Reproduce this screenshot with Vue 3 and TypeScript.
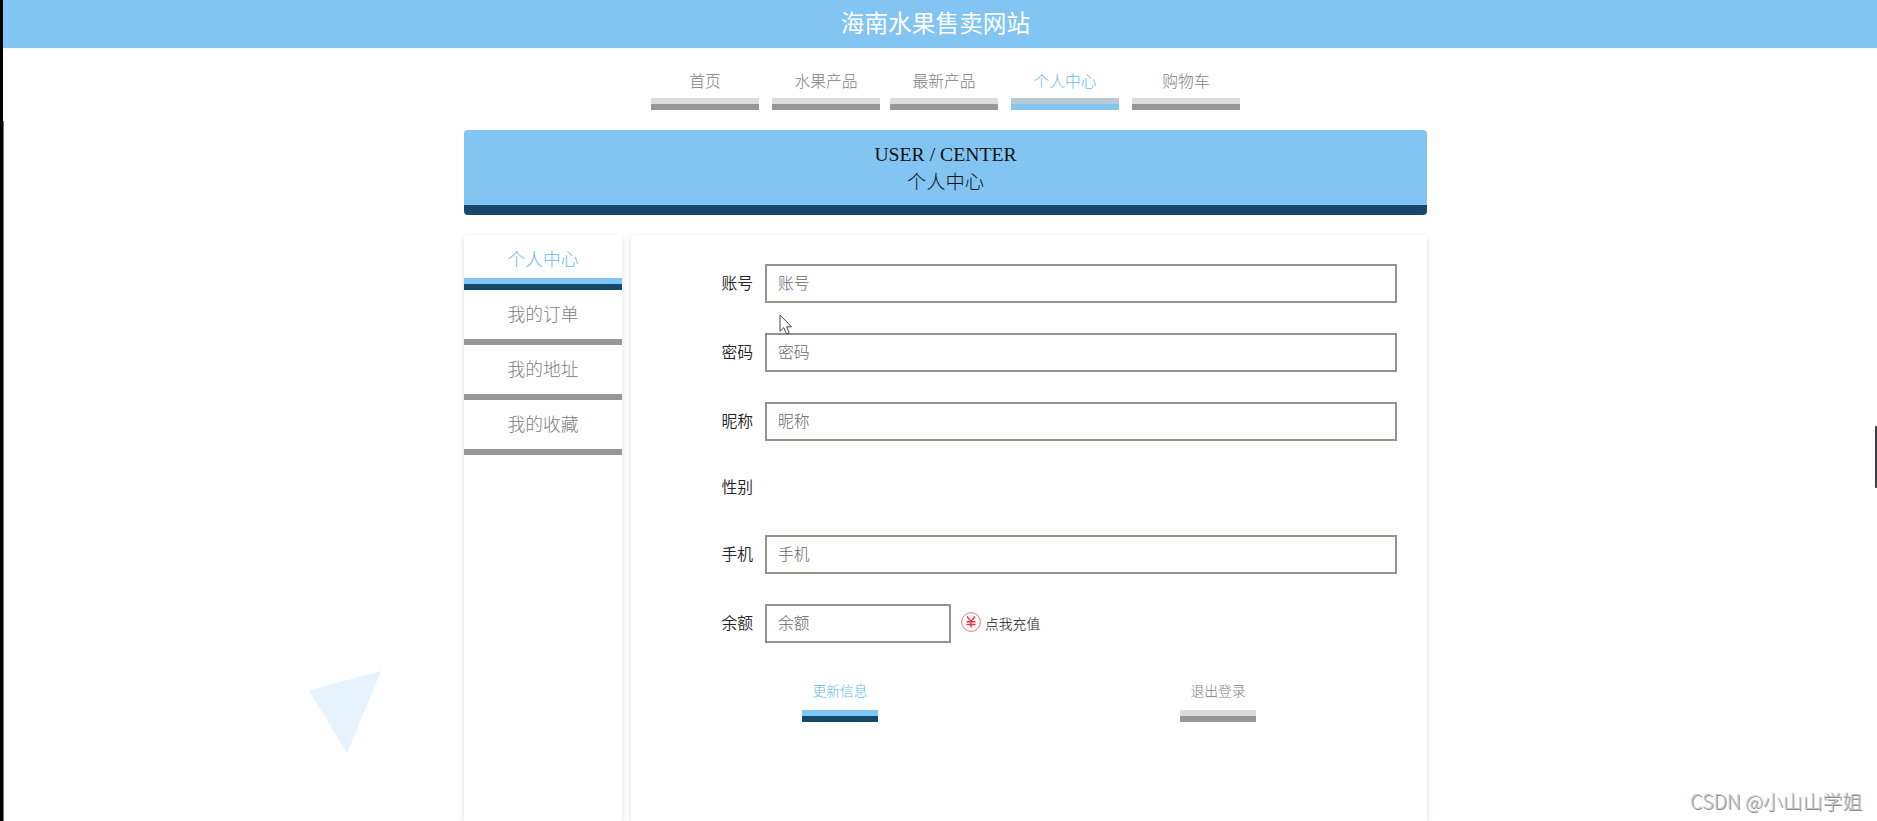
<script setup lang="ts">
interface Tab { label: string; active?: boolean }
interface Field { label: string; kind: 'full' | 'none' | 'short' }

const tabs: Tab[] = [
  { label: '首页' },
  { label: '水果产品' },
  { label: '最新产品' },
  { label: '个人中心', active: true },
  { label: '购物车' },
]
const menu: Tab[] = [
  { label: '个人中心', active: true },
  { label: '我的订单' },
  { label: '我的地址' },
  { label: '我的收藏' },
]
const fields: Field[] = [
  { label: '账号', kind: 'full' },
  { label: '密码', kind: 'full' },
  { label: '昵称', kind: 'full' },
  { label: '性别', kind: 'none' },
  { label: '手机', kind: 'full' },
  { label: '余额', kind: 'short' },
]
</script>

<template>
  <div class="page">
    <header class="header"><h1>海南水果售卖网站</h1></header>
    <nav class="nav">
      <a v-for="t in tabs" :key="t.label" class="tab" :class="{ active: t.active }">{{ t.label }}</a>
    </nav>
    <section class="banner">
      <div class="en">USER / CENTER</div>
      <div class="zh">个人中心</div>
    </section>
    <div class="content">
      <aside class="side">
        <a v-for="m in menu" :key="m.label" class="item" :class="{ active: m.active }">{{ m.label }}</a>
      </aside>
      <main class="panel">
        <div v-for="f in fields" :key="f.label" class="row" :class="f.kind">
          <label class="label">{{ f.label }}</label>
          <input v-if="f.kind !== 'none'" class="input" type="text" :placeholder="f.label" />
          <span v-if="f.kind === 'short'" class="recharge">
            <svg class="yen" width="22" height="22" viewBox="0 0 22 22" fill="none">
              <circle cx="11" cy="11" r="9.4" stroke="#f2777b" stroke-width="1" />
              <path d="M7 5.5L11 10.5L15 5.5M11 10.5V16.5M6.5 10.8H15.5M6.5 13.5H15.5" stroke="#e5343c" stroke-width="1.4" />
            </svg>
            <span>点我充值</span>
          </span>
        </div>
        <div class="actions">
          <button class="btn primary">更新信息</button>
          <button class="btn">退出登录</button>
        </div>
      </main>
    </div>

    <div class="edge-top"></div>
    <div class="edge"></div>
    <div class="handle"></div>
    <svg class="shard" width="74" height="86" viewBox="0 0 74 86">
      <path d="M1 22.5L73 3L39 85Z" fill="#e6f3fd" />
    </svg>
    <svg class="cursor" width="14" height="21" viewBox="0 0 14 21">
      <path d="M1 1V17.2L4.7 13.7L7.3 19.5H9.8V18L7.7 12.8H12.5Z" fill="#fff" stroke="#444" stroke-width="1" />
    </svg>
    <div class="watermark">CSDN @小山山学姐</div>
  </div>
</template>

<style>
body { margin: 0; overflow: hidden; background: #fefefe; }
</style>

<style scoped>
.page {
  position: relative;
  height: 821px;
  overflow: hidden;
  display: flex;
  flex-direction: column;
  background: #fefefe;
  font-family: "Noto Sans CJK SC", sans-serif;
  font-weight: 300;
}
.header {
  flex: none;
  height: 48px;
  background: #82c5f3;
  border-bottom: 1px solid #eff9fe;
  text-align: center;
  padding-right: 6px;
}
.header h1 {
  margin: 0;
  font-size: 23.7px;
  line-height: 45px;
  font-weight: 400;
  color: #fff;
}
.nav {
  flex: none;
  display: flex;
  margin: 15px 0 0 651px;
  gap: 13px;
}
.tab {
  width: 108px;
  height: 40px;
  border-bottom: 6px solid #979797;
  box-shadow: inset 0 -6px #dcdcdc;
  color: #808080;
  font-size: 15.8px;
  line-height: 33px;
  text-align: center;
}
.tab:nth-child(2) { margin-right: -3px; }
.tab.active { color: #68b8ee; border-color: #82c5f3; box-shadow: inset 0 -6px #b9cad5; }
.banner {
  flex: none;
  box-sizing: border-box;
  width: 963px;
  height: 85px;
  margin: 20px 0 0 464px;
  padding-top: 11px;
  border-bottom: 10px solid #16486c;
  border-radius: 4px;
  background: #82c5f3;
  color: #111;
  font: 19.7px/27px "Liberation Serif", "Noto Sans CJK SC", serif;
  text-align: center;
}
.zh { padding-top: 1px; font-size: 19.3px; font-weight: 300; }
.content {
  display: flex;
  gap: 9px;
  height: 700px;
  margin: 20px 0 0 464px;
}
.side, .panel { background: #fefefe; box-shadow: 0 2px 6px rgba(0, 0, 0, .12); }
.side { width: 158px; }
.item {
  display: block;
  box-sizing: border-box;
  height: 55px;
  border-bottom: 6px solid #979797;
  color: #808080;
  font-size: 17.8px;
  line-height: 46px;
  text-align: center;
}
.item.active { color: #68b8ee; border-color: #16486c; box-shadow: inset 0 -6px #82c5f3; }
.panel { width: 796px; box-sizing: border-box; padding-top: 29px; }
.row {
  display: flex;
  align-items: center;
  height: 39px;
  margin-bottom: 30px;
  padding-left: 90.5px;
}
.row.none { height: 34px; }
.label { width: 43.5px; padding-bottom: 3px; font-size: 15.8px; color: #222; font-weight: 350; }
.input {
  box-sizing: border-box;
  width: 632px;
  height: 39px;
  padding: 0 11px 3px;
  border: 2px solid #94948a;
  border-radius: 0;
  background: transparent;
  font: 300 15.8px "Noto Sans CJK SC", sans-serif;
  outline: none;
}
.input::placeholder { color: #666; opacity: 1; }
.short .input { width: 186px; }
.recharge { display: flex; align-items: center; margin-left: 9px; padding-bottom: 1px; font-size: 13.8px; color: #111; gap: 3px; }
.yen { margin-top: -2px; }
.actions { display: flex; gap: 302px; padding-left: 171px; }
.btn {
  box-sizing: border-box;
  width: 76px;
  height: 49px;
  padding: 0 0 10px;
  border: 0;
  border-bottom: 6px solid #979797;
  box-shadow: inset 0 -6px #dcdcdc;
  background: transparent;
  color: #808080;
  font: 300 13.8px/30px "Noto Sans CJK SC", sans-serif;
}
.btn.primary { color: #68b8ee; border-color: #16486c; box-shadow: inset 0 -6px #82c5f3; }
.edge-top { position: absolute; left: 0; top: 0; width: 3px; height: 821px; background: #000; }
.edge { position: absolute; left: 3px; top: 121px; width: 1px; height: 700px; background: #777; }
.handle { position: absolute; right: 0; top: 426px; width: 2px; height: 62px; background: #3f4041; border-radius: 1px 0 0 1px; }
.shard { position: absolute; left: 308px; top: 668px; }
.cursor { position: absolute; left: 779px; top: 314px; }
.watermark {
  position: absolute;
  right: 15px;
  bottom: 6px;
  font: 300 19.8px/29px "Noto Sans CJK SC", sans-serif;
  color: #c4c4c4;
  text-shadow: 1px 1px 0 #8c8c8c;
}
</style>
